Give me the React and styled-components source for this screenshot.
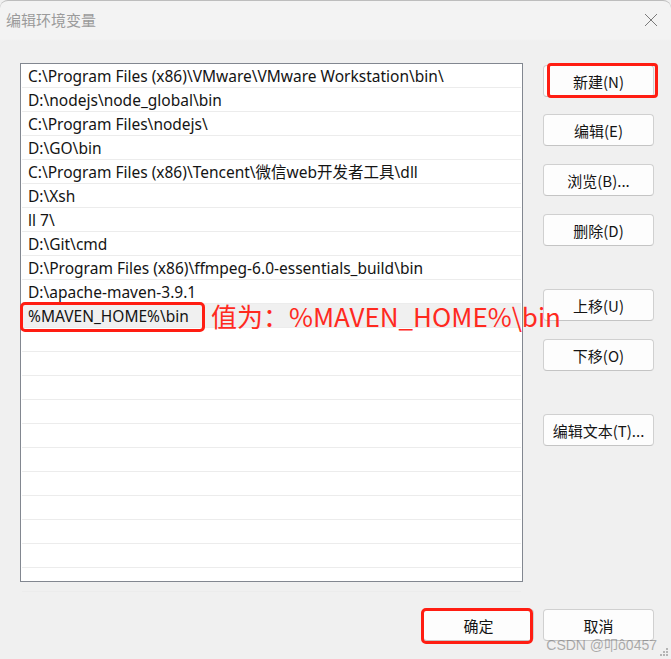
import styled, { createGlobalStyle } from 'styled-components';

const PATHS = [
  'C:\\Program Files (x86)\\VMware\\VMware Workstation\\bin\\',
  'D:\\nodejs\\node_global\\bin',
  'C:\\Program Files\\nodejs\\',
  'D:\\GO\\bin',
  'C:\\Program Files (x86)\\Tencent\\微信web开发者工具\\dll',
  'D:\\Xsh',
  'll 7\\',
  'D:\\Git\\cmd',
  'D:\\Program Files (x86)\\ffmpeg-6.0-essentials_build\\bin',
  'D:\\apache-maven-3.9.1',
  '%MAVEN_HOME%\\bin',
];

const EMPTY_ROWS = 11;

const SIDE_BUTTONS = [
  { label: '新建(N)', gap: 0, marked: true },
  { label: '编辑(E)', gap: 17 },
  { label: '浏览(B)...', gap: 18 },
  { label: '删除(D)', gap: 18 },
  { label: '上移(U)', gap: 43 },
  { label: '下移(O)', gap: 18 },
  { label: '编辑文本(T)...', gap: 43 },
];

const App = () => {
  return (
    <>
      <GlobalStyle />
      <Window>
        <TitleBar>
          <Title>编辑环境变量</Title>
          <CloseIcon width='14' height='14' viewBox='0 0 14 14'>
            <path d='M1 1 L13 13 M13 1 L1 13' stroke='#7a7a7a' strokeWidth='1' fill='none' />
          </CloseIcon>
        </TitleBar>
        <Body>
          <List>
            {PATHS.map((p, i) => {
              const last = i === PATHS.length - 1;
              return (
                <Row key={p} selected={last}>
                  {p}
                  {last && (
                    <>
                      <CellMark />
                      <Note>值为：%MAVEN_HOME%\bin</Note>
                    </>
                  )}
                </Row>
              );
            })}
            {Array.from({ length: EMPTY_ROWS }).map((_, i) => (
              <Row key={'e' + i} />
            ))}
          </List>
          <SideColumn>
            {SIDE_BUTTONS.map((b) => (
              <ButtonSlot key={b.label} gap={b.gap}>
                <Button>{b.label}</Button>
                {b.marked && <SideMark />}
              </ButtonSlot>
            ))}
          </SideColumn>
        </Body>
        <Footer>
          <ButtonSlot gap={0}>
            <Button>确定</Button>
            <OkMark />
          </ButtonSlot>
          <Button>取消</Button>
        </Footer>
        <Watermark>CSDN @叩ô0457</Watermark>
        <Grip width='8' height='8' viewBox='0 0 8 8'>
          <rect x='6' y='0' width='2' height='2' fill='#b5b5b5' />
          <rect x='3' y='3' width='2' height='2' fill='#b5b5b5' />
          <rect x='6' y='3' width='2' height='2' fill='#b5b5b5' />
          <rect x='0' y='6' width='2' height='2' fill='#b5b5b5' />
          <rect x='3' y='6' width='2' height='2' fill='#b5b5b5' />
          <rect x='6' y='6' width='2' height='2' fill='#b5b5b5' />
        </Grip>
      </Window>
    </>
  );
};

const GlobalStyle = createGlobalStyle`
  html, body {
    margin: 0;
    padding: 0;
    background: #f0f0f0;
  }
  body {
    font-family: "Noto Sans", "Noto Sans CJK SC", sans-serif;
  }
`;

const Window = styled.div`
  position: relative;
  width: 671px;
  height: 659px;
  box-sizing: border-box;
  border-top: 1px solid #bdbdbd;
  border-radius: 8px 8px 0 0;
  background: linear-gradient(#f3f3f3 0, #f3f3f3 38px, #f0f0f0 40px);
  display: flex;
  flex-direction: column;
  overflow: hidden;
`;

const TitleBar = styled.div`
  height: 39px;
  display: flex;
  align-items: center;
  justify-content: space-between;
  padding: 0 13px 0 6px;
`;

const Title = styled.span`
  font-family: "Noto Sans CJK SC", sans-serif;
  font-size: 15px;
  color: #9b9b9b;
  margin-top: -2px;
`;

const CloseIcon = styled.svg`
  display: block;
  margin-top: -1px;
`;

const Body = styled.div`
  display: flex;
  gap: 20px;
  padding: 23px 0 0 20px;
`;

const List = styled.div`
  width: 503px;
  height: 519px;
  box-sizing: border-box;
  border: 1px solid #828790;
  background: #ffffff;
  display: flex;
  flex-direction: column;
  overflow: visible;
  position: relative;
  z-index: 1;
`;

const Row = styled.div`
  position: relative;
  flex: none;
  height: 24px;
  box-sizing: border-box;
  border-bottom: 1px solid #ececec;
  margin: 0 1px;
  padding-left: 6px;
  display: flex;
  align-items: center;
  font-size: 15.5px;
  color: #141414;
  white-space: nowrap;
  background: ${(p) => (p.selected ? '#f0f0f0' : 'transparent')};
`;

const CellMark = styled.div`
  position: absolute;
  left: -2px;
  top: -2px;
  width: 185px;
  height: 30px;
  box-sizing: border-box;
  border: 3px solid #ff1d12;
  border-radius: 5px;
`;

const Note = styled.span`
  position: absolute;
  left: 189px;
  top: -3px;
  font-size: 26px;
  line-height: 30px;
  color: #ff2a1f;
  font-family: "Noto Sans CJK SC", sans-serif;
`;

const SideColumn = styled.div`
  display: flex;
  flex-direction: column;
  padding-top: 2px;
`;

const ButtonSlot = styled.div`
  position: relative;
  margin-top: ${(p) => p.gap}px;
`;

const Button = styled.button`
  display: flex;
  align-items: center;
  justify-content: center;
  width: 111px;
  height: 32px;
  box-sizing: border-box;
  border: 1px solid #d0d0d0;
  border-bottom-color: #c4c4c4;
  border-radius: 4px;
  background: #fdfdfd;
  font-family: "Noto Sans CJK SC", sans-serif;
  font-size: 15px;
  color: #141414;
  padding: 0;
`;

const SideMark = styled.div`
  position: absolute;
  left: 4px;
  top: -2px;
  width: 111px;
  height: 35px;
  box-sizing: border-box;
  border: 3px solid #ff1d12;
  border-radius: 4px;
`;

const OkMark = styled.div`
  position: absolute;
  left: -2px;
  top: -1px;
  width: 112px;
  height: 36px;
  box-sizing: border-box;
  border: 3.5px solid #ff1d12;
  border-radius: 5px;
`;

const Footer = styled.div`
  display: flex;
  justify-content: flex-end;
  gap: 9px;
  padding: 27px 17px 0 0;
`;

const Watermark = styled.div`
  position: absolute;
  right: 14px;
  bottom: 5px;
  font-family: "Liberation Sans", "Noto Sans CJK SC", sans-serif;
  font-size: 14px;
  color: rgba(110, 110, 110, 0.55);
  pointer-events: none;
`;

const Grip = styled.svg`
  position: absolute;
  right: 3px;
  bottom: 3px;
`;

export default App;
